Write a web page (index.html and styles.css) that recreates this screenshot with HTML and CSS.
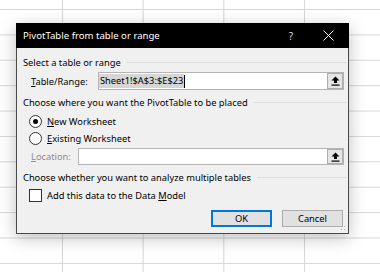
FILE: index.html
```html
<!DOCTYPE html>
<html lang="en">
<head>
    <meta charset="UTF-8">
    <title>PivotTable from table or range</title>
    <link rel="stylesheet" href="styles.css">
</head>
<body>
<div class="sheet">
    <div class="dialog">
        <div class="title-bar">
            <span class="title">PivotTable from table or range</span>
            <span class="help">?</span>
            <span class="close">
                <svg width="11" height="11" viewBox="0 0 11 11"><path d="M0.5 0.5 L10.5 10.5 M10.5 0.5 L0.5 10.5" stroke="#fff" stroke-width="1"/></svg>
            </span>
        </div>
        <div class="dialog-body">
            <div class="group-head"><span>Select a table or range</span><i></i></div>
            <div class="field-row">
                <label class="field-label"><u>T</u>able/Range:</label>
                <div class="field-box">
                    <span class="selected">Sheet1!$A$3:$E$23</span><span class="caret"></span>
                    <span class="picker">
                        <svg width="9" height="10" viewBox="0 0 9 10"><path d="M4.5 0.5 L8.5 4.5 L6 4.5 L6 7 L3 7 L3 4.5 L0.5 4.5 Z" fill="#000"/><rect x="0.5" y="8.5" width="8" height="1.2" fill="#000"/></svg>
                    </span>
                </div>
            </div>

            <div class="group-head second"><span>Choose where you want the PivotTable to be placed</span><i></i></div>
            <div class="option-row first">
                <span class="radio checked"></span><span><u>N</u>ew Worksheet</span>
            </div>
            <div class="option-row">
                <span class="radio"></span><span><u>E</u>xisting Worksheet</span>
            </div>
            <div class="field-row location">
                <label class="field-label disabled"><u>L</u>ocation:</label>
                <div class="field-box">
                    <span class="picker">
                        <svg width="9" height="10" viewBox="0 0 9 10"><path d="M4.5 0.5 L8.5 4.5 L6 4.5 L6 7 L3 7 L3 4.5 L0.5 4.5 Z" fill="#000"/><rect x="0.5" y="8.5" width="8" height="1.2" fill="#000"/></svg>
                    </span>
                </div>
            </div>

            <div class="group-head third"><span>Choose whether you want to analyze multiple tables</span><i></i></div>
            <div class="option-row check-row">
                <span class="checkbox"></span><span>Add this data to the Data <u>M</u>odel</span>
            </div>

            <div class="buttons">
                <button class="btn default">OK</button>
                <button class="btn">Cancel</button>
            </div>
            <span class="grip"></span>
        </div>
    </div>
</div>
</body>
</html>
```

FILE: styles.css
```css
html, body {
    margin: 0;
    padding: 0;
}
body {
    width: 380px;
    height: 272px;
    overflow: hidden;
    font-family: "Noto Sans", "Open Sans", sans-serif;
    font-size: 9.3px;
    color: #000;
}
.sheet {
    width: 380px;
    height: 272px;
    background-color: #fff;
    background-image:
        linear-gradient(to bottom, #d6d6d6 1px, transparent 1px),
        linear-gradient(to right, #d6d6d6 1px, transparent 1px);
    background-size: 100% 25.4px, 80.67px 100%;
    background-position: 0 9px, 62px 0;
    padding: 23px 0 0 16px;
    box-sizing: border-box;
}
.dialog {
    width: 333px;
    height: 211px;
    box-sizing: border-box;
    background: #f0f0f0;
    border: 1px solid #4a4a4a;
    border-top: none;
    box-shadow: 0 4px 16px rgba(0, 0, 0, 0.25);
    display: flex;
    flex-direction: column;
}
.title-bar {
    height: 25px;
    margin: 0 -1px;
    background: #000;
    color: #fff;
    display: flex;
    align-items: center;
    padding-left: 7px;
    flex-shrink: 0;
}
.title {
    flex: 1;
    font-size: 9.6px;
}
.help {
    width: 14px;
    text-align: center;
    margin-right: 25px;
    font-size: 10px;
    color: #ddd;
}
.close {
    width: 11px;
    height: 11px;
    margin-right: 15px;
    display: flex;
}
.dialog-body {
    position: relative;
    flex: 1;
    padding: 4px 4px 0 6px;
    display: flex;
    flex-direction: column;
}
.group-head {
    height: 20px;
    display: flex;
    align-items: center;
    flex-shrink: 0;
}
.group-head i {
    flex: 1;
    height: 1px;
    background: #dcdcdc;
    margin-left: 6px;
    margin-right: -2px;
}
.group-head.second {
    margin-top: 2px;
}
.group-head.third {
    margin-top: 3px;
    height: 19px;
}
.field-row {
    height: 18px;
    display: flex;
    align-items: center;
    padding-left: 8px;
}
.field-label {
    width: 67px;
    flex: none;
}
.field-label.disabled {
    color: #8d8d8d;
    width: 47px;
}
.field-row.location {
    height: 17px;
    margin-top: 1px;
}
.field-box {
    flex: 1;
    height: 100%;
    box-sizing: border-box;
    border: 1px solid #b4b4b4;
    background: #fff;
    display: flex;
    align-items: center;
    position: relative;
}
.selected {
    background: #d6d6d6;
    padding: 0 1px;
    line-height: 14px;
}
.caret {
    width: 1px;
    height: 13px;
    background: #000;
}
.picker {
    position: absolute;
    right: 0;
    top: 0;
    bottom: 0;
    width: 16px;
    box-sizing: border-box;
    border: 1px solid #adadad;
    background: #e5e5e5;
    display: flex;
    align-items: center;
    justify-content: center;
}
.option-row {
    height: 17px;
    display: flex;
    align-items: center;
    padding-left: 6px;
    gap: 5px;
}
.option-row.first {
    height: 18px;
}
.radio {
    width: 11px;
    height: 11px;
    border: 1px solid #333;
    border-radius: 50%;
    background: #fff;
    position: relative;
    flex: none;
}
.radio.checked::after {
    content: "";
    position: absolute;
    left: 3px;
    top: 3px;
    width: 5px;
    height: 5px;
    border-radius: 50%;
    background: #000;
}
.check-row {
    height: 16px;
}
.checkbox {
    width: 11px;
    height: 11px;
    border: 1px solid #333;
    background: #fff;
    flex: none;
}
.buttons {
    margin-top: 7px;
    display: flex;
    justify-content: flex-end;
    gap: 10px;
    padding-right: 1px;
}
.btn {
    flex: none;
    width: 61px;
    height: 17px;
    box-sizing: border-box;
    font-family: inherit;
    font-size: 9.3px;
    color: #000;
    background: #e1e1e1;
    border: 1px solid #adadad;
    padding: 0;
}
.btn.default {
    border: 2px solid #0078d7;
}
.grip {
    position: absolute;
    right: 1px;
    bottom: 1px;
    width: 7px;
    height: 7px;
    background-image: radial-gradient(circle, #b0b0b0 0.8px, transparent 1px);
    background-size: 3px 3px;
}
```
